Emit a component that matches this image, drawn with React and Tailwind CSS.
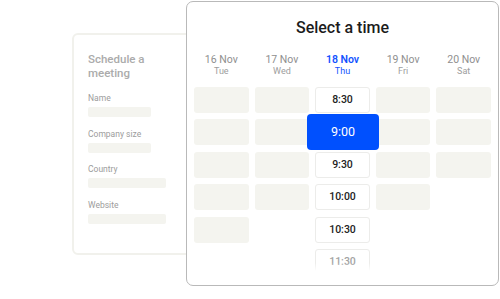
import React from "react";

const days = [
  { date: "16 Nov", day: "Tue", slots: 5 },
  { date: "17 Nov", day: "Wed", slots: 4 },
  { date: "18 Nov", day: "Thu", active: true },
  { date: "19 Nov", day: "Fri", slots: 4 },
  { date: "20 Nov", day: "Sat", slots: 3 },
];

const times = ["8:30", "9:00", "9:30", "10:00", "10:30", "11:30"];

const fields = [
  { label: "Name", width: "w-[63px]" },
  { label: "Company size", width: "w-[63px]" },
  { label: "Country", width: "w-[78px]" },
  { label: "Website", width: "w-[78px]" },
];

const BackCard = () => (
  <div className="absolute left-[72px] top-[33px] w-[150px] h-[222px] rounded-[6px] border-2 border-[#f1f1ec] bg-white pl-[14px] pt-[17px]">
    <h3 className="text-[11.5px] leading-[14px] font-medium text-[#ababab] w-[70px]">
      Schedule a meeting
    </h3>
    <div className="mt-[13px] flex flex-col gap-[11.5px]">
      {fields.map((f) => (
        <div key={f.label}>
          <div className="text-[8.5px] leading-[11px] text-[#9c9c9c]">
            {f.label}
          </div>
          <div
            className={`${f.width} h-[10px] mt-[3px] rounded-[2px] bg-[#f4f4ef]`}
          />
        </div>
      ))}
    </div>
  </div>
);

const TimeCell = ({ t, i }) => {
  if (t === "9:00") {
    return (
      <div className="relative h-[26px]">
        <div className="absolute -left-[8px] -right-[9px] -top-[5px] -bottom-[5px] rounded-[4px] bg-[#0050fe] flex items-center justify-center text-white text-[12.5px]">
          {t}
        </div>
      </div>
    );
  }
  return (
    <div
      className={`h-[26px] rounded-[3px] border border-[#ececea] bg-white flex items-center justify-center text-[10.5px] font-medium ${
        i === 5 ? "text-[#a3a3a3]" : "text-[#222]"
      }`}
    >
      {t}
    </div>
  );
};

export default function App() {
  return (
    <div className="relative w-[500px] h-[299px] bg-white overflow-hidden font-['Roboto',sans-serif]">
      <BackCard />

      <div className="absolute left-[186px] top-[1px] w-[313px] h-[285px] rounded-[7px] border border-[#b9b9b9] bg-white">
        <h2 className="pt-[16px] text-center text-[16px] leading-[20px] font-medium text-[#1c1c1c]">
          Select a time
        </h2>

        <div className="relative mt-[15px] px-[7px] h-[218px] overflow-hidden">
          <div className="grid grid-cols-5 gap-x-[6px]">
            {days.map((d, col) => (
              <div key={d.date} className="flex flex-col">
                <div
                  className={`text-center text-[10.5px] leading-[13px] ${
                    d.active ? "text-[#1453ff] font-semibold" : "text-[#8f8f8f]"
                  }`}
                >
                  {d.date}
                </div>
                <div
                  className={`text-center text-[9px] leading-[11px] ${
                    d.active ? "text-[#1453ff]" : "text-[#9d9d9d]"
                  }`}
                >
                  {d.day}
                </div>
                <div className="mt-[10px] flex flex-col gap-[6.4px]">
                  {d.active
                    ? times.map((t, i) => <TimeCell key={t} t={t} i={i} />)
                    : Array.from({ length: d.slots }).map((_, i) => (
                        <div
                          key={col + "-" + i}
                          className="h-[26px] rounded-[3px] bg-[#f4f4ef]"
                        />
                      ))}
                </div>
              </div>
            ))}
          </div>
          <div className="absolute left-0 right-0 bottom-0 h-[8px] bg-gradient-to-b from-white/0 to-white" />
        </div>
      </div>
    </div>
  );
}
